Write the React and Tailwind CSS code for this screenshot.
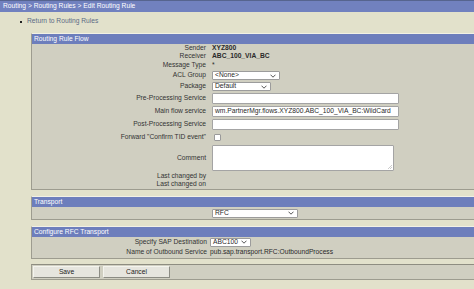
import React from 'react';

const Chevron = () => (
  <svg className="w-[6px] h-[4px]" viewBox="0 0 6 4" fill="none" stroke="#444" strokeWidth="0.9">
    <path d="M0.5 0.7 L3 3.2 L5.5 0.7" />
  </svg>
);

const Select = ({ value, width }) => (
  <div className={`flex items-center justify-between h-[9px] bg-white border border-[#9c9c9c] rounded-[1px] pl-[2px] pr-[3px] ${width}`}>
    <span className="leading-none">{value}</span>
    <Chevron />
  </div>
);

const Input = ({ value }) => (
  <div className="flex items-center h-[11px] w-[187px] bg-white border border-[#a4a4a4] rounded-[1px] px-[2px]">
    <span className="leading-none whitespace-nowrap">{value}</span>
  </div>
);

const Row = ({ label, h, children, labelW = 'w-[174px]', gap = 'ml-[6px]' }) => (
  <div className={`flex items-center ${h}`}>
    <div className={`${labelW} shrink-0 text-right leading-none text-[#333]`}>{label}</div>
    <div className={`${gap} flex items-center`}>{children}</div>
  </div>
);

const Panel = ({ title, children, body = 'py-0' }) => (
  <div className="ml-[31px] w-[460px] border border-[#9d9c8f] border-t-[#f2f1e4] bg-[#d0cfc1]">
    <div className="h-[10px] bg-[#6d7ebc] text-white flex items-center pl-[2px] leading-none">{title}</div>
    <div className={body}>{children}</div>
  </div>
);

export default function App() {
  return (
    <div className="w-[474px] h-[289px] overflow-hidden bg-[#e2e1cb] text-[6.7px] text-[#2a2a2a] font-['Liberation_Sans',Arial,sans-serif]">
      <div className="h-[12px] bg-[#7181bf] border-t border-[#56648f] text-white flex items-center pl-[3px] leading-none">
        Routing &gt; Routing Rules &gt; Edit Routing Rule
      </div>

      <div className="h-[21px] flex items-center pl-[20px] pb-[2px]">
        <span className="w-[2px] h-[2px] bg-[#222] mr-[5px]" />
        <span className="text-[#5c6b85] leading-none">Return to Routing Rules</span>
      </div>

      <Panel title="Routing Rule Flow">
        <Row label="Sender" h="h-[8px]"><span className="font-bold">XYZ800</span></Row>
        <Row label="Receiver" h="h-[9px]"><span className="font-bold">ABC_100_VIA_BC</span></Row>
        <Row label="Message Type" h="h-[9px]"><span>*</span></Row>
        <Row label="ACL Group" h="h-[11px]"><Select value="<None>" width="w-[68px]" /></Row>
        <Row label="Package" h="h-[11px]"><Select value="Default" width="w-[59px]" /></Row>
        <Row label="Pre-Processing Service" h="h-[13px]"><Input value="" /></Row>
        <Row label="Main flow service" h="h-[13px]"><Input value="wm.PartnerMgr.flows.XYZ800.ABC_100_VIA_BC:WildCard" /></Row>
        <Row label="Post-Processing Service" h="h-[13px]"><Input value="" /></Row>
        <Row label={'Forward "Confirm TID event"'} h="h-[13px]">
          <div className="ml-[2px] w-[7px] h-[7px] bg-white border border-[#9a9a9a] rounded-[1px]" />
        </Row>
        <Row label="Comment" h="h-[28px]">
          <div className="relative w-[182px] h-[26px] bg-white border border-[#a4a4a4] rounded-[1px]">
            <svg className="absolute right-[1px] bottom-[1px] w-[4px] h-[4px]" viewBox="0 0 4 4" stroke="#999" strokeWidth="0.5">
              <path d="M0 4 L4 0 M2 4 L4 2" />
            </svg>
          </div>
        </Row>
        <Row label="Last changed by" h="h-[8px]" />
        <Row label="Last changed on" h="h-[9px]" />
      </Panel>

      <div className="h-[6px]" />
      <Panel title="Transport">
        <Row label="" h="h-[12px]"><Select value="RFC" width="w-[86px]" /></Row>
      </Panel>

      <div className="h-[6px]" />
      <Panel title="Configure RFC Transport" body="pb-[1px]">
        <Row label="Specify SAP Destination" h="h-[10px]" labelW="w-[175px]" gap="ml-[3px]"><Select value="ABC100" width="w-[41px]" /></Row>
        <Row label="Name of Outbound Service" h="h-[10px]" labelW="w-[175px]" gap="ml-[3px]"><span>pub.sap.transport.RFC:OutboundProcess</span></Row>
      </Panel>

      <div className="h-[5px]" />
      <div className="ml-[31px] w-[460px] h-[16px] border border-[#9d9c8f] border-t-[#8e8d81] bg-[#d0cfc1] flex items-center gap-[3px] pl-[1px]">
        <button className="w-[67px] h-[12px] bg-[#e6e5de] border border-[#8c8c84] border-t-[#f4f4ee] border-l-[#f4f4ee] leading-none text-[#222]">Save</button>
        <button className="w-[67px] h-[12px] bg-[#e6e5de] border border-[#8c8c84] border-t-[#f4f4ee] border-l-[#f4f4ee] leading-none text-[#222]">Cancel</button>
      </div>
    </div>
  );
}
